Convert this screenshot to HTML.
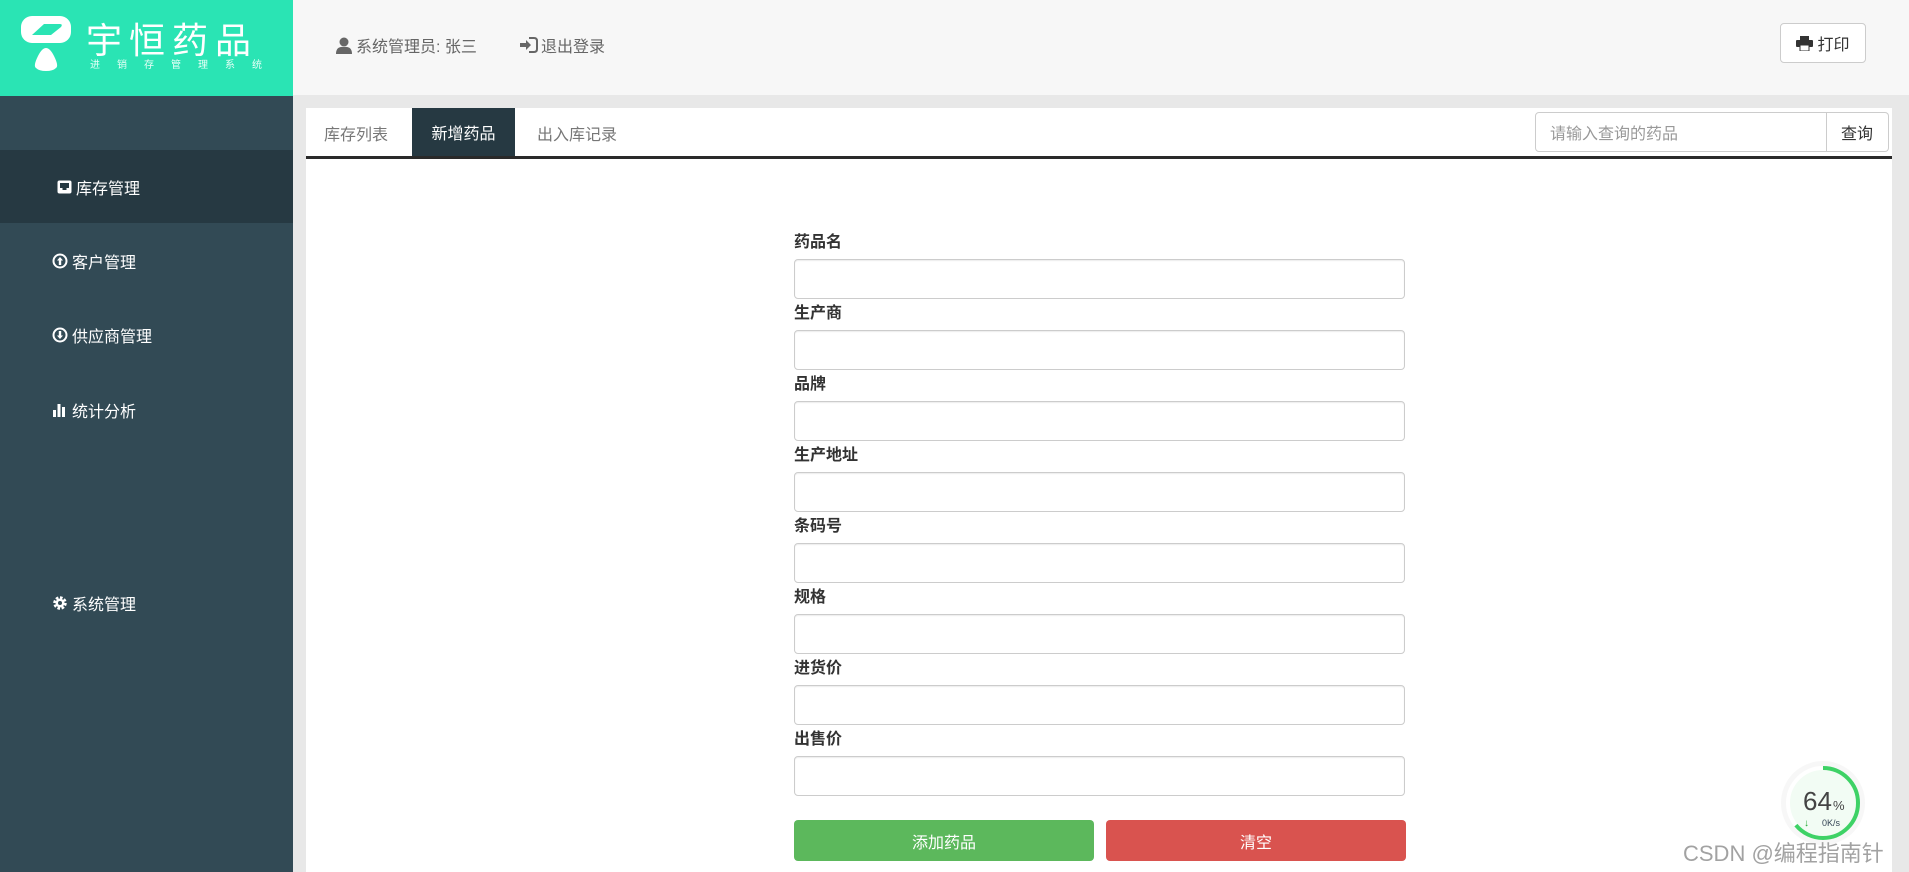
<!DOCTYPE html>
<html><head><meta charset="utf-8"><style>
*{margin:0;padding:0;box-sizing:border-box}
body{width:1909px;height:872px;overflow:hidden;background:#e8e8e8;font-family:"Liberation Sans","Noto Sans CJK SC",sans-serif;position:relative}
.abs{position:absolute}
#logo{left:0;top:0;width:293px;height:96px;background:#2ae4b4}
#side{left:0;top:96px;width:293px;height:776px;background:#324a55}
#hdr{left:293px;top:0;width:1616px;height:95px;background:#f7f7f7}
.nav{position:absolute;left:52px;color:#fff;font-size:16px;display:flex;align-items:center;gap:4px}
.panel{left:306px;top:108px;width:1586px;height:764px;background:#fff}
.lbl{position:absolute;left:794px;font-size:16px;font-weight:bold;color:#333}
.inp{position:absolute;left:794px;width:611px;height:40px;border:1px solid #ccc;border-radius:4px;background:#fff;box-shadow:inset 0 1px 1px rgba(0,0,0,.075)}
</style></head><body>
<div id="logo" class="abs">
 <svg class="abs" style="left:18px;top:14px" width="56" height="60" viewBox="0 0 56 60">
  <rect x="3" y="2" width="50" height="27" rx="11" fill="#fff"/>
  <path d="M14 21 L26 10 L42 10 Q45 10 43 13 L33 21 Z" fill="#2ae4b4"/>
  <path d="M28 34 Q32 34 36 42 Q41 52 38 54 Q35 57 28 57 Q21 57 18 54 Q15 52 20 42 Q24 34 28 34Z" fill="#fff"/>
 </svg>
 <div class="abs" style="left:86px;top:12px;color:#fff;font-size:36px;letter-spacing:7px;font-family:'Noto Sans CJK SC',sans-serif;font-weight:400">宇恒药品</div>
 <div class="abs" style="left:90px;top:56px;color:#e8fff7;font-size:10px;letter-spacing:17px">进销存管理系统</div>
</div>
<div id="hdr" class="abs">
 <div class="abs" style="left:43px;top:33px;color:#666;font-size:16px;display:flex;align-items:center;gap:4px">
  <svg width="16" height="17" viewBox="0 0 16 17"><circle cx="8" cy="5" r="4.5" fill="#666"/><path d="M0 17 Q0 9 8 10 Q16 9 16 17Z" fill="#666"/></svg>系统管理员: 张三</div>
 <div class="abs" style="left:227px;top:33px;color:#666;font-size:16px;display:flex;align-items:center;gap:3px">
  <svg width="18" height="16" viewBox="0 0 18 16"><path d="M0 6h6V3l5 5-5 5v-3H0z" fill="#666"/><path d="M9 1h5q3 0 3 3v8q0 3-3 3H9" stroke="#666" stroke-width="2" fill="none"/></svg>退出登录</div>
 <div class="abs" style="left:1487px;top:23px;width:86px;height:40px;border:1px solid #ccc;border-radius:4px;background:#fff;font-size:16px;color:#333;display:flex;align-items:center;justify-content:center;gap:4px">
  <svg width="17" height="15" viewBox="0 0 17 15"><rect x="4" y="0" width="9" height="4" fill="#333"/><rect x="0" y="4" width="17" height="7" rx="1" fill="#333"/><rect x="4" y="9" width="9" height="6" fill="#fff" stroke="#333"/></svg>打印</div>
</div>
<div id="side" class="abs">
 <div class="abs" style="left:0;top:54px;width:293px;height:73px;background:#263942"></div>
 <div class="nav" style="top:79px;left:57px"><svg width="15" height="14" viewBox="0 0 15 14"><rect x="0.5" y="0.5" width="14" height="13" rx="2" fill="#fff"/><path d="M3 3h9v5H9.5v2h-4V8H3z" fill="#263942"/></svg>库存管理</div>
 <div class="nav" style="top:153px"><svg width="16" height="16" viewBox="0 0 16 16"><circle cx="8" cy="8" r="6.5" fill="none" stroke="#fff" stroke-width="2"/><path d="M8 4l3 3.5H9.2V12H6.8V7.5H5z" fill="#fff"/></svg>客户管理</div>
 <div class="nav" style="top:227px"><svg width="16" height="16" viewBox="0 0 16 16"><circle cx="8" cy="8" r="6.5" fill="none" stroke="#fff" stroke-width="2"/><path d="M8 12l3-3.5H9.2V4H6.8v4.5H5z" fill="#fff"/></svg>供应商管理</div>
 <div class="nav" style="top:302px"><svg width="16" height="14" viewBox="0 0 16 14"><rect x="1" y="7" width="3" height="7" fill="#fff"/><rect x="5.5" y="1" width="3" height="13" fill="#fff"/><rect x="10" y="4" width="3" height="10" fill="#fff"/></svg>统计分析</div>
 <div class="nav" style="top:495px"><svg width="16" height="16" viewBox="0 0 16 16"><circle cx="8" cy="8" r="5" fill="none" stroke="#fff" stroke-width="3.5" stroke-dasharray="2.4 1.5"/><circle cx="8" cy="8" r="4.5" fill="#fff"/><circle cx="8" cy="8" r="2" fill="#324a55"/></svg>系统管理</div>
</div>
<div class="abs panel"></div>
<div class="abs" style="left:306px;top:156px;width:1586px;height:3px;background:#2a2a2a"></div>
<div class="abs" style="left:324px;top:121px;font-size:16px;color:#777">库存列表</div>
<div class="abs" style="left:412px;top:108px;width:103px;height:48px;background:#263942;color:#fff;font-size:16px;display:flex;align-items:center;justify-content:center">新增药品</div>
<div class="abs" style="left:537px;top:121px;font-size:16px;color:#777">出入库记录</div>
<div class="abs" style="left:1535px;top:112px;width:292px;height:40px;border:1px solid #ccc;border-radius:4px 0 0 4px;font-size:16px;color:#999;padding:7px 14px">请输入查询的药品</div>
<div class="abs" style="left:1826px;top:112px;width:63px;height:40px;border:1px solid #ccc;border-left:none;border-radius:0 4px 4px 0;font-size:16px;color:#333;display:flex;align-items:center;justify-content:center">查询</div>

<div class="lbl" style="top:228px">药品名</div><div class="inp" style="top:259px"></div>
<div class="lbl" style="top:299px">生产商</div><div class="inp" style="top:330px"></div>
<div class="lbl" style="top:370px">品牌</div><div class="inp" style="top:401px"></div>
<div class="lbl" style="top:441px">生产地址</div><div class="inp" style="top:472px"></div>
<div class="lbl" style="top:512px">条码号</div><div class="inp" style="top:543px"></div>
<div class="lbl" style="top:583px">规格</div><div class="inp" style="top:614px"></div>
<div class="lbl" style="top:654px">进货价</div><div class="inp" style="top:685px"></div>
<div class="lbl" style="top:725px">出售价</div><div class="inp" style="top:756px"></div>
<div class="abs" style="left:794px;top:820px;width:300px;height:41px;background:#5cb85c;border-radius:4px;color:#fff;font-size:16px;display:flex;align-items:center;justify-content:center">添加药品</div>
<div class="abs" style="left:1106px;top:820px;width:300px;height:41px;background:#d9534f;border-radius:4px;color:#fff;font-size:16px;display:flex;align-items:center;justify-content:center">清空</div>

<svg class="abs" style="left:1780px;top:760px" width="86" height="86" viewBox="0 0 86 86">
 <circle cx="43" cy="43" r="42" fill="#f7f7f7"/>
 <circle cx="43" cy="43" r="34" fill="#f2fcf4"/>
 <circle cx="43" cy="43" r="35" fill="none" stroke="#fff" stroke-width="4"/>
 <circle cx="43" cy="43" r="35" fill="none" stroke="#3ed266" stroke-width="4" stroke-dasharray="140.7 220" transform="rotate(-90 43 43)"/>
 <text x="23" y="50" font-size="26" fill="#444" font-family="Liberation Sans">64</text>
 <text x="53" y="50" font-size="13" fill="#444" font-family="Liberation Sans">%</text>
 <text x="24" y="66" font-size="10" fill="#2a3" font-family="Liberation Sans">↓</text>
 <text x="42" y="66" font-size="9" fill="#345" font-family="Liberation Sans">0K/s</text>
</svg>
<div class="abs" style="left:1683px;top:836px;font-size:22px;color:#999;opacity:.9">CSDN @编程指南针</div>
</body></html>
